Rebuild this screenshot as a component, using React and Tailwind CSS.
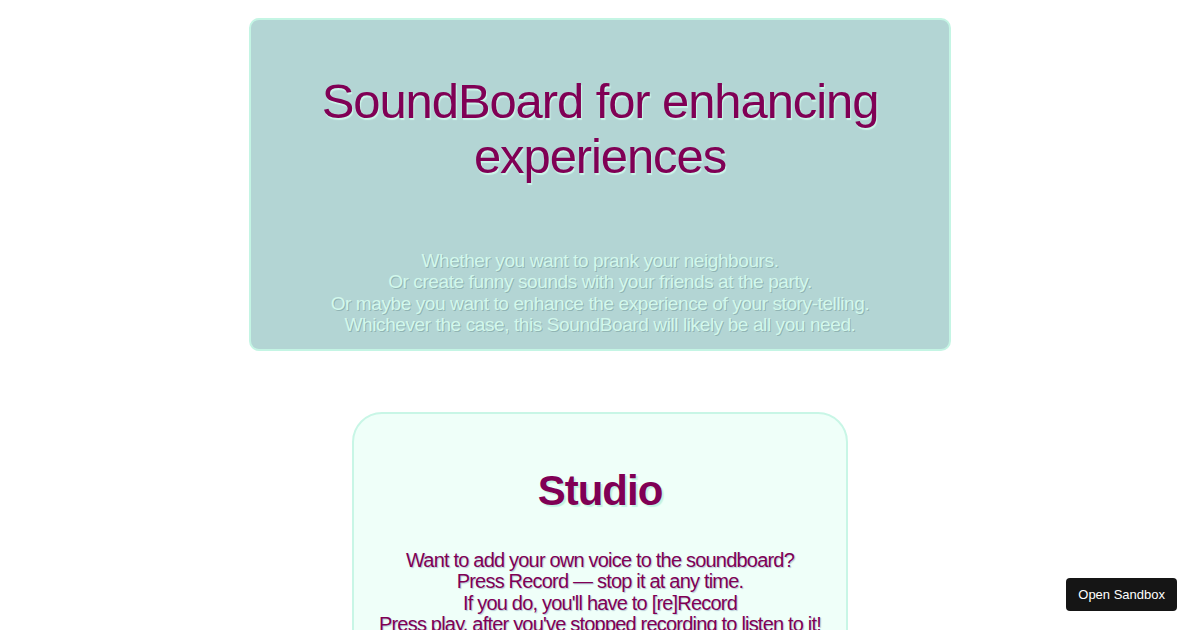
import React from 'react';

const studioLines = [
  'Want to add your own voice to the soundboard?',
  'Press Record — stop it at any time.',
  "If you do, you'll have to [re]Record",
  "Press play, after you've stopped recording to listen to it!",
];

const introLines = [
  'Whether you want to prank your neighbours.',
  'Or create funny sounds with your friends at the party.',
  'Or maybe you want to enhance the experience of your story-telling.',
  'Whichever the case, this SoundBoard will likely be all you need.',
];

export default function App() {
  return (
    <div
      className="min-h-screen bg-white flex flex-col items-center pt-[18px] pb-16"
      style={{ fontFamily: '"Liberation Sans", Arial, sans-serif' }}
    >
      {/* Hero */}
      <header className="w-[702px] h-[333px] bg-[#b3d5d4] border-2 border-[#c4f5e4] rounded-[10px] flex flex-col items-center pt-[54px] text-center">
        <h1 className="text-[49px] leading-[55px] tracking-[-1.1px] text-[#800055] [text-shadow:1px_2px_1px_#cdf6ea] px-16">
          SoundBoard for enhancing experiences
        </h1>
        <div className="mt-[66px] text-[19px] leading-[21.3px] tracking-[-0.4px] text-[#d2f8ec] [text-shadow:1px_1px_0_rgba(60,100,100,0.3)]">
          {introLines.map((l) => (
            <p key={l}>{l}</p>
          ))}
        </div>
      </header>

      {/* Studio */}
      <section className="mt-[61px] w-[496px] bg-[#effff9] border-2 border-[#c8f6e6] rounded-[30px] flex flex-col items-center pt-[54px] pb-12 text-center">
        <h2 className="text-[42px] leading-[46px] tracking-[-1px] font-bold text-[#800055] [text-shadow:2px_2px_1px_#c3f3e3]">
          Studio
        </h2>
        <div className="mt-[36px] text-[20px] leading-[21.4px] tracking-[-0.8px] text-[#800055] [text-shadow:1px_1px_1px_#b4c9d6]">
          {studioLines.map((l) => (
            <p key={l}>{l}</p>
          ))}
        </div>
      </section>

      <button className="fixed right-[23px] bottom-[19px] h-[33px] px-[12px] bg-[#151515] text-white text-[13px] rounded-[4px]">
        Open Sandbox
      </button>
    </div>
  );
}
